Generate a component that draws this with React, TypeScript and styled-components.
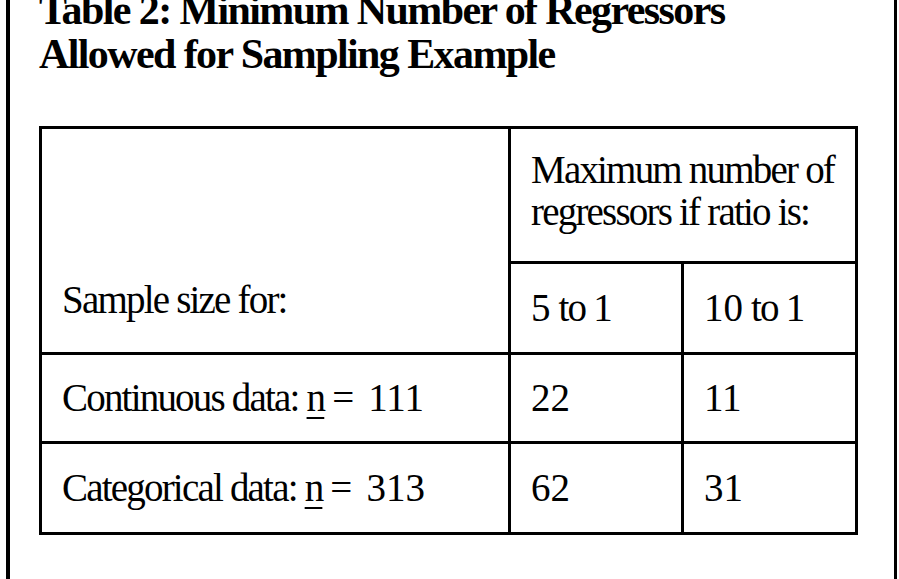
import React from 'react';
import styled, { createGlobalStyle } from 'styled-components';

const GlobalStyle = createGlobalStyle`
  html, body {
    margin: 0;
    padding: 0;
    background: #ffffff;
    overflow: hidden;
  }
  body {
    font-family: "Liberation Serif", "Times New Roman", serif;
    color: #000000;
  }
`;

const Frame = styled.div`
  box-sizing: border-box;
  width: 891px;
  height: 579px;
  overflow: hidden;
  margin-left: 6px;
  border-left: 4px solid #000;
  border-right: 3px solid #000;
  padding-left: 29px;
  display: flex;
  flex-direction: column;
  align-items: flex-start;
`;

const Title = styled.h2`
  margin: -12px 0 0 0;
  font-size: 42px;
  line-height: 44px;
  font-weight: 700;
  letter-spacing: -1.6px;
  white-space: nowrap;
`;

const Table = styled.table`
  box-sizing: border-box;
  flex-shrink: 0;
  margin-top: 50px;
  width: 819px;
  table-layout: fixed;
  border-collapse: separate;
  border-spacing: 0;
  border-top: 3px solid #000;
  border-left: 3px solid #000;
  font-size: 39px;
  line-height: 42px;
  letter-spacing: -1.8px;
`;

const Cell = styled.td<{ $h: number; $align?: 'top' | 'middle' | 'bottom'; $pt?: number; $pb?: number }>`
  height: ${p => p.$h}px;
  padding: ${p => p.$pt ?? 0}px 20px ${p => p.$pb ?? 0}px 20px;
  vertical-align: ${p => p.$align ?? 'middle'};
  border-right: 3px solid #000;
  border-bottom: 3px solid #000;
  font-weight: 400;
  text-align: left;
  white-space: nowrap;
`;

const Wrap = styled.span`
  white-space: normal;
  display: block;
`;

const Num = styled.span`
  letter-spacing: 0;
`;

const Var = styled.u`
  text-decoration-thickness: 2px;
  text-underline-offset: 6px;
`;

const rows = [
  { label: 'Continuous data:', n: '111', five: '22', ten: '11', h: 86 },
  { label: 'Categorical data:', n: '313', five: '62', ten: '31', h: 88 },
];

const App: React.FC = () => {
  return (
    <>
      <GlobalStyle />
      <Frame>
        <Title>
          Table 2: Minimum Number of Regressors
          <br />
          Allowed for Sampling Example
        </Title>

        <Table>
          <colgroup>
            <col style={{ width: 469 }} />
            <col style={{ width: 173 }} />
            <col style={{ width: 174 }} />
          </colgroup>
          <tbody>
            <tr>
              <Cell as="th" rowSpan={2} $h={192} $align="bottom" $pb={31}>
                Sample size for:
              </Cell>
              <Cell as="th" colSpan={2} $h={112} $align="top" $pt={20}>
                <Wrap>
                  Maximum number of
                  <br />
                  regressors if ratio is:
                </Wrap>
              </Cell>
            </tr>
            <tr>
              <Cell as="th" $h={88}>
                <Num>5</Num> to <Num>1</Num>
              </Cell>
              <Cell as="th" $h={88}>
                <Num>10</Num> to <Num>1</Num>
              </Cell>
            </tr>
            {rows.map(r => (
              <tr key={r.label}>
                <Cell $h={r.h}>
                  {r.label} <Var>n</Var> =&nbsp;&nbsp;<Num>{r.n}</Num>
                </Cell>
                <Cell $h={r.h}>
                  <Num>{r.five}</Num>
                </Cell>
                <Cell $h={r.h}>
                  <Num>{r.ten}</Num>
                </Cell>
              </tr>
            ))}
          </tbody>
        </Table>
      </Frame>
    </>
  );
};

export default App;
